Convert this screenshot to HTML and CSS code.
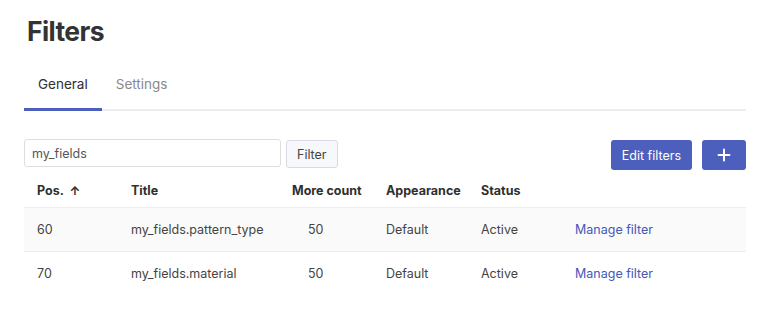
FILE: index.html
```html
<!DOCTYPE html>
<html>
<head>
<meta charset="utf-8">
<link rel="stylesheet" href="styles.css">
</head>
<body>
<div class="page">
  <h1 class="title">Filters</h1>
  <div class="tabs">
    <div class="tab active">General</div>
    <div class="tab">Settings</div>
  </div>
  <div class="toolbar">
    <div class="search">
      <input class="input" type="text" value="my_fields">
      <button class="btn-light">Filter</button>
    </div>
    <div class="actions">
      <button class="btn-primary">Edit filters</button>
      <button class="btn-primary btn-plus"><svg width="14" height="14" viewBox="0 0 14 14"><path d="M7 1.5v11M1.5 7h11" stroke="#fff" stroke-width="2" stroke-linecap="round"/></svg></button>
    </div>
  </div>
  <div class="table">
    <div class="row head">
      <div class="cell">Pos. <span class="arrow">↑</span></div>
      <div class="cell">Title</div>
      <div class="cell">More count</div>
      <div class="cell">Appearance</div>
      <div class="cell">Status</div>
      <div class="cell"></div>
    </div>
    <div class="row body shaded">
      <div class="cell">60</div>
      <div class="cell">my_fields.pattern_type</div>
      <div class="cell num">50</div>
      <div class="cell">Default</div>
      <div class="cell">Active</div>
      <div class="cell"><a class="link">Manage filter</a></div>
    </div>
    <div class="row body">
      <div class="cell">70</div>
      <div class="cell">my_fields.material</div>
      <div class="cell num">50</div>
      <div class="cell">Default</div>
      <div class="cell">Active</div>
      <div class="cell"><a class="link">Manage filter</a></div>
    </div>
  </div>
</div>
</body>
</html>
```

FILE: styles.css
```css
* { box-sizing: border-box; }
html, body { margin: 0; padding: 0; background: #fff; }
body { font-family: Inter, "Noto Sans", sans-serif; color: #3a3a3a; font-size: 12.5px; }
.page { padding: 0 22px 0 24px; }
.title { margin: 0; padding-top: 13px; font-size: 26.5px; font-weight: 700; line-height: 36px; color: #333; letter-spacing: -0.6px; padding-left: 3px; }
.tabs { display: flex; margin-top: 18px; border-bottom: 2px solid #ececec; }
.tab { padding: 8px 14px 15px; font-size: 13.5px; color: #8a8a8a; margin-bottom: -2px; border-bottom: 3px solid transparent; line-height: 18px; }
.tab.active { color: #2f2f2f; border-bottom-color: #4c5fbd; }
.toolbar { display: flex; justify-content: space-between; align-items: flex-start; margin-top: 28px; }
.search { display: flex; gap: 5px; align-items: flex-start; }
.input { width: 257px; height: 28px; border: 1px solid #dedede; border-radius: 3px; padding: 0 7px; font: inherit; font-size: 12.5px; color: #555; outline: none; }
.btn-light { height: 28px; margin-top: 1px; padding: 0 10px; border: 1px solid #d8dbe6; border-radius: 3px; background: #f7f8fb; font: inherit; font-size: 12.5px; color: #444; }
.actions { display: flex; gap: 10px; margin-top: 1px; }
.btn-primary { height: 30px; padding: 0 11px; border: none; border-radius: 3px; background: #4c5fbd; color: #fff; font: inherit; font-size: 12.5px; display: flex; align-items: center; justify-content: center; }
.btn-plus { width: 44px; padding: 0; }
.table { margin-top: 3px; }
.row { display: grid; grid-template-columns: 94px 161px 94px 95px 94px 1fr; align-items: center; }
.row.head { height: 34px; font-weight: 700; color: #2f2f2f; }
.row.body { height: 44px; border-top: 1px solid #eeeeee; color: #444; }
.row.shaded { background: #fafafa; }
.cell { padding-left: 13px; white-space: nowrap; }
.cell.num { padding-left: 29px; }
.arrow { font-size: 12px; margin-left: 3px; }
.link { color: #4458b8; }
```
